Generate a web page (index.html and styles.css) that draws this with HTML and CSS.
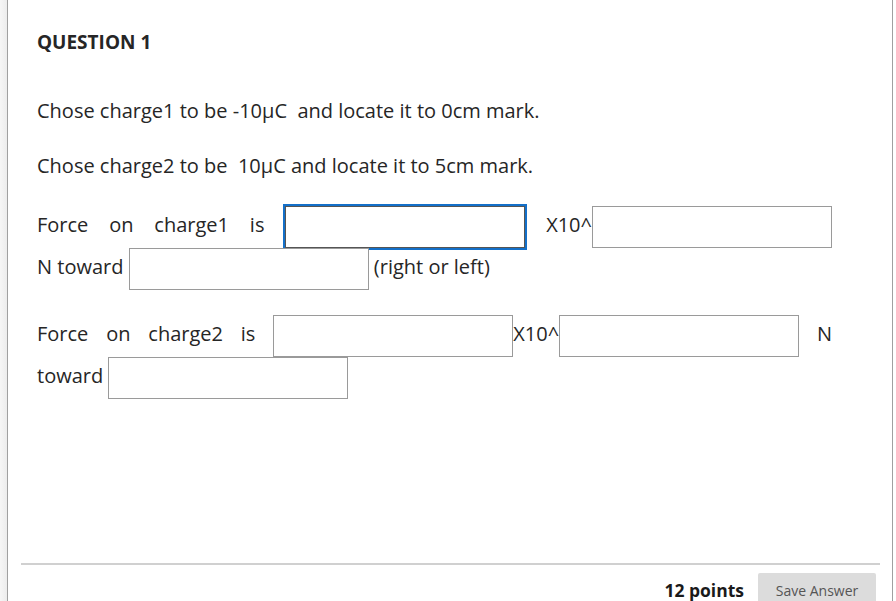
FILE: index.html
```html
<!DOCTYPE html>
<html lang="en">
<head>
  <meta charset="UTF-8" />
  <title>Question 1</title>
  <link rel="stylesheet" href="styles.css">
</head>
<body>
  <div class="page">
    <div class="gutter"></div>
    <div class="question">
      <h3 class="question-title">QUESTION 1</h3>

      <div class="question-body">
        <p>Chose charge1 to be -10µC&nbsp; and locate it to 0cm mark.</p>
        <p>Chose charge2 to be&nbsp; 10µC and locate it to 5cm mark.</p>
        <p class="fill">Force on charge1 is <input type="text" class="blank focused"> X10^<input type="text" class="blank"> N&nbsp;toward <input type="text" class="blank"> (right or left)</p>
        <p class="fill">Force on charge2 is <input type="text" class="blank">X10^<input type="text" class="blank"> N toward <input type="text" class="blank"></p>
      </div>

      <div class="question-footer">
        <span class="points">12 points</span>
        <button class="save-btn">Save Answer</button>
      </div>
    </div>
  </div>
</body>
</html>
```

FILE: styles.css
```css
* { box-sizing: border-box; }

body {
  margin: 0;
  padding: 0;
  font-family: "Open Sans", "Noto Sans", sans-serif;
  background: #fff;
  color: #262626;
  overflow: hidden;
}

.page {
  display: flex;
  height: 601px;
}

.gutter {
  width: 7px;
  background: linear-gradient(90deg, #f6f6f6, #ececec);
}

.question {
  width: 886px;
  border-left: 1px solid #a0a0a0;
  border-right: 1px solid #a0a0a0;
  display: flex;
  flex-direction: column;
}

.question-title {
  margin: 29px 0 0 29px;
  font-size: 19px;
  font-weight: 700;
  line-height: 26px;
  color: #262626;
}

.question-body {
  padding: 0 60px 0 29px;
  flex: 1;
  font-size: 20px;
}

.question-body p {
  margin: 42px 0 0;
  line-height: 28px;
}

.question-body p + p {
  margin-top: 27px;
}

/* text with blanks, stretched to the full width like the original */
.question-body .fill {
  text-align: justify;
  line-height: 20px;
  margin-top: 26px;
}

.question-body .fill + .fill {
  margin-top: 25px;
}

.blank {
  width: 240px;
  height: 42px;
  border: 1px solid #9a9a9a;
  border-radius: 0;
  background: #fff;
  vertical-align: middle;
  font: inherit;
  padding: 0 6px;
  margin: 0;
}

.blank.focused {
  border: 1px solid #555;
  outline: 2px solid #1470c9;
  outline-offset: 0;
}

.question-footer {
  height: 38px;
  margin: 0 12px 0 13px;
  border-top: 2px solid #d0d0d0;
  display: flex;
  justify-content: flex-end;
  align-items: flex-start;
  gap: 14px;
  padding: 8px 4px 0 0;
}

.points {
  font-size: 17.5px;
  font-weight: 700;
  line-height: 24px;
  margin-top: 5px;
  color: #1a1a1a;
}

.save-btn {
  flex-shrink: 0;
  background: #dcdcdc;
  border: none;
  border-radius: 2px;
  color: #555;
  font-family: "Open Sans", sans-serif;
  font-size: 14px;
  padding: 0;
  width: 118px;
  height: 35px;
  line-height: 20px;
  text-align: center;
  white-space: nowrap;
}
```
